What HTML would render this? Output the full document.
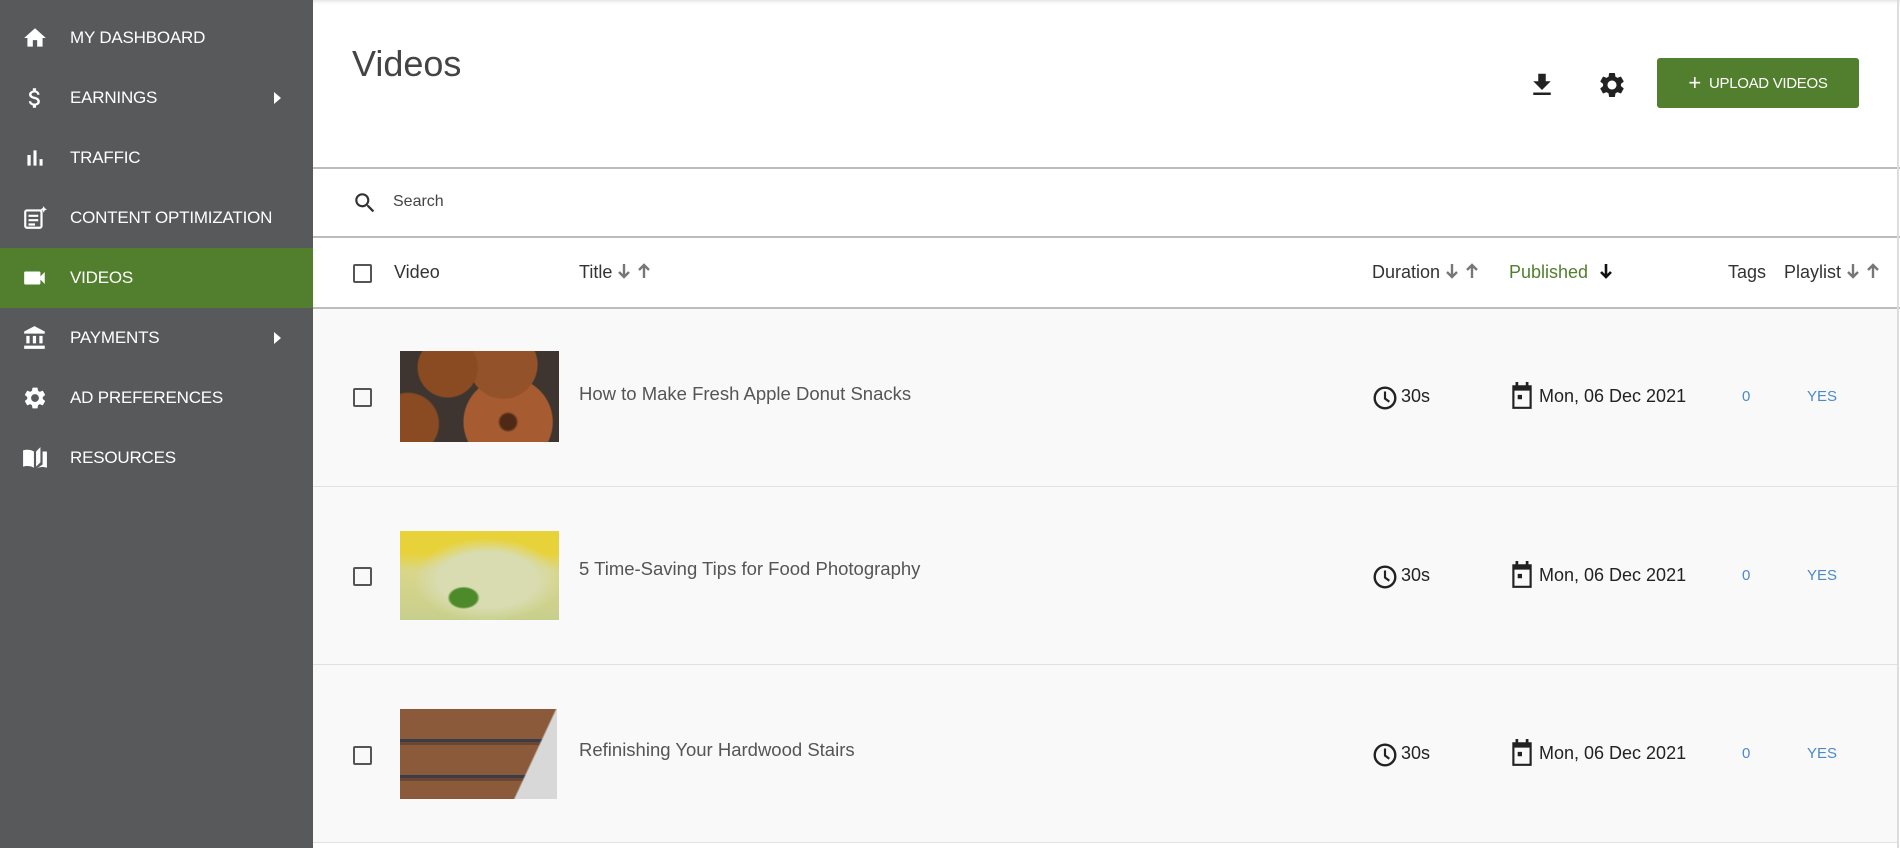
<!DOCTYPE html>
<html><head><meta charset="utf-8"><style>
*{margin:0;padding:0;box-sizing:border-box}
body{width:1900px;height:848px;overflow:hidden;font-family:"Liberation Sans",sans-serif;background:#fff;position:relative}
.sb{position:absolute;left:0;top:0;width:313px;height:848px;background:#58595b}
.it{position:absolute;left:0;width:313px;height:60px;color:#fff;font-size:17px;letter-spacing:-0.2px}
.it.act{background:#527f2e}
.it .ic{position:absolute;left:22px;top:17px;width:26px;height:26px}
.it .tx{position:absolute;left:70px;top:20px}
.it .ar{position:absolute;left:274px;top:24px;width:0;height:0;border-left:7px solid #fff;border-top:6px solid transparent;border-bottom:6px solid transparent}
.main{position:absolute;left:313px;top:0;right:0;height:848px;box-shadow:inset 0 4px 4px -3px rgba(0,0,0,.15)}
.abs{position:absolute}
.hl{position:absolute;left:313px;right:0;height:2px;background:#bcbcbc}
.cb{position:absolute;left:353px;width:19px;height:19px;border:2px solid #555;border-radius:2px}
.th{position:absolute;top:262px;font-size:18px;color:#333;white-space:nowrap}
.th svg{vertical-align:-2px;margin-left:4px}
.row{position:absolute;left:313px;right:2px;background:#f9f9f9;border-bottom:1px solid #e0e0e0}
.tt{position:absolute;left:579px;font-size:18.5px;color:#555}
.dur,.dt{position:absolute;font-size:18px;color:#222}
.z,.y{position:absolute;font-size:15px;color:#4a8ac9}
</style></head><body>
<div class="sb">
 <div class="it" style="top:8px"><svg class="ic" viewBox="0 0 24 24"><path fill="#fff" d="M10 20v-6h4v6h5v-8h3L12 3 2 12h3v8z"/></svg><span class="tx">MY DASHBOARD</span></div>
 <div class="it" style="top:68px"><svg class="ic" viewBox="0 0 24 24"><path fill="#fff" d="M11.8 10.9c-2.270-.59-3-1.2-3-2.15 0-1.09 1.01-1.85 2.7-1.85 1.78 0 2.440.85 2.5 2.1h2.21c-.07-1.72-1.12-3.3-3.21-3.81V3h-3v2.16c-1.94.42-3.5 1.68-3.5 3.61 0 2.31 1.91 3.46 4.7 4.13 2.5.6 3 1.48 3 2.41 0 .69-.49 1.79-2.7 1.79-2.06 0-2.87-.92-2.98-2.1h-2.2c.12 2.19 1.76 3.42 3.68 3.83V21h3v-2.15c1.95-.37 3.5-1.5 3.5-3.55 0-2.84-2.43-3.81-4.7-4.4z"/></svg><span class="tx">EARNINGS</span><span class="ar"></span></div>
 <div class="it" style="top:128px"><svg class="ic" viewBox="0 0 24 24"><path fill="#fff" d="M5 9.2h3V19H5zM10.6 5h2.8v14h-2.8zm5.6 8H19v6h-2.8z"/></svg><span class="tx">TRAFFIC</span></div>
 <div class="it" style="top:188px"><svg class="ic" viewBox="0 0 24 24"><rect x="3" y="5" width="15" height="16" rx="1.5" fill="none" stroke="#fff" stroke-width="2"/><path fill="#fff" d="M6 9h9v2H6zm0 4h9v2H6zm0 4h6v2H6zM20 1l1 2 2 1-2 1-1 2-1-2-2-1 2-1z"/></svg><span class="tx">CONTENT OPTIMIZATION</span></div>
 <div class="it act" style="top:248px"><svg class="ic" viewBox="0 0 24 24"><path fill="#fff" d="M17 10.5V7c0-.55-.45-1-1-1H3c-.55 0-1 .45-1 1v10c0 .55.45 1 1 1h13c.55 0 1-.45 1-1v-3.5l4 4v-11l-4 4z"/></svg><span class="tx">VIDEOS</span></div>
 <div class="it" style="top:308px"><svg class="ic" viewBox="0 0 24 24"><path fill="#fff" d="M4 10v7h3v-7H4zm6 0v7h3v-7h-3zM2 22h19v-3H2v3zm14-12v7h3v-7h-3zm-4.5-9L2 6v2h19V6l-9.5-5z"/></svg><span class="tx">PAYMENTS</span><span class="ar"></span></div>
 <div class="it" style="top:368px"><svg class="ic" viewBox="0 0 24 24"><path fill="#fff" d="M19.14 12.94c.04-.3.06-.61.06-.94 0-.32-.02-.64-.07-.94l2.03-1.58a.49.49 0 00.12-.61l-1.92-3.32a.488.488 0 00-.59-.22l-2.39.96c-.5-.38-1.030-.7-1.62-.94l-.36-2.54a.484.484 0 00-.48-.41h-3.84c-.24 0-.43.17-.47.41l-.36 2.54c-.59.24-1.13.57-1.62.94l-2.39-.96c-.22-.08-.47 0-.59.22L2.74 8.87c-.12.21-.08.47.12.61l2.03 1.58c-.05.3-.09.63-.09.94s.02.64.07.94l-2.03 1.58a.49.49 0 00-.12.61l1.92 3.32c.12.22.37.29.59.22l2.39-.96c.5.38 1.03.7 1.62.94l.36 2.54c.05.24.24.41.48.41h3.84c.24 0 .44-.17.47-.41l.36-2.54c.59-.24 1.13-.56 1.62-.94l2.39.96c.22.08.47 0 .59-.22l1.92-3.32c.12-.22.07-.47-.12-.61l-2.01-1.58zM12 15.6c-1.98 0-3.6-1.62-3.6-3.6s1.62-3.6 3.6-3.6 3.6 1.62 3.6 3.6-1.62 3.6-3.6 3.6z"/></svg><span class="tx">AD PREFERENCES</span></div>
 <div class="it" style="top:428px"><svg class="ic" viewBox="0 0 24 24"><path fill="#fff" d="M1 5c3-1 7-1 10 1v15c-3-2-7-2-10-1zm12 1l4-4v14l-4 4zm6 0h4v15c-3-1-7-1-10 1l6-4z"/></svg><span class="tx">RESOURCES</span></div>
</div>
<div class="main"></div>
<div class="abs" style="left:352px;top:43px;font-size:36px;color:#444">Videos</div>
<svg class="abs" style="left:1527px;top:70px" width="30" height="30" viewBox="0 0 24 24"><path fill="#222" d="M19 9h-4V3H9v6H5l7 7 7-7zM5 18v2h14v-2H5z"/></svg>
<svg class="abs" style="left:1597px;top:70px" width="30" height="30" viewBox="0 0 24 24"><path fill="#222" d="M19.14 12.94c.04-.3.06-.61.06-.94 0-.32-.02-.64-.07-.94l2.03-1.58a.49.49 0 00.12-.61l-1.92-3.32a.488.488 0 00-.59-.22l-2.39.96c-.5-.38-1.03-.7-1.62-.94l-.36-2.54a.484.484 0 00-.48-.41h-3.84c-.24 0-.43.17-.47.41l-.36 2.540c-.59.24-1.13.57-1.62.94l-2.39-.96c-.22-.08-.47 0-.59.22L2.74 8.87c-.12.21-.08.47.12.61l2.03 1.58c-.05.3-.09.63-.09.94s.02.64.07.94l-2.03 1.58a.49.49 0 00-.12.61l1.92 3.32c.12.22.37.29.59.22l2.39-.96c.5.38 1.03.7 1.62.94l.36 2.54c.05.24.24.41.48.41h3.84c.24 0 .44-.17.47-.41l.36-2.54c.59-.24 1.13-.56 1.62-.94l2.39.96c.22.08.47 0 .59-.22l1.92-3.32c.12-.22.07-.47-.12-.61l-2.01-1.58zM12 15.6c-1.98 0-3.6-1.62-3.6-3.6s1.62-3.6 3.6-3.6 3.6 1.62 3.6 3.6-1.62 3.6-3.6 3.6z"/></svg>
<div class="abs" style="left:1657px;top:58px;width:202px;height:50px;background:#527f2e;border-radius:3px;color:#fff;font-size:15px;line-height:50px;text-align:center;letter-spacing:-0.3px"><span style="font-size:22px;vertical-align:-2px;margin-right:8px">+</span>UPLOAD VIDEOS</div>
<div class="hl" style="top:167px"></div>
<svg class="abs" style="left:352px;top:190px" width="26" height="26" viewBox="0 0 24 24"><path fill="#333" d="M15.5 14h-.79l-.28-.27A6.47 6.47 0 0016 9.5 6.5 6.5 0 109.5 16c1.61 0 3.09-.59 4.23-1.57l.27.28v.79l5 4.99L20.49 19l-4.99-5zm-6 0C7.01 14 5 11.990 5 9.5S7.01 5 9.5 5 14 7.01 14 9.5 11.99 14 9.5 14z"/></svg>
<div class="abs" style="left:393px;top:193px;font-size:16px;color:#444">Search</div>
<div class="hl" style="top:236px"></div>
<div class="cb" style="top:264px"></div>
<div class="th" style="left:394px">Video</div>
<div class="th" style="left:579px">Title<svg width="16" height="18" viewBox="0 0 16 18"><path d="M8 2v13M3 10l5 5 5-5" fill="none" stroke="#777" stroke-width="2.4"/></svg><svg width="16" height="18" viewBox="0 0 16 18"><path d="M8 16V3M3 8l5-5 5 5" fill="none" stroke="#777" stroke-width="2.4"/></svg></div>
<div class="th" style="left:1372px">Duration<svg width="16" height="18" viewBox="0 0 16 18"><path d="M8 2v13M3 10l5 5 5-5" fill="none" stroke="#777" stroke-width="2.4"/></svg><svg width="16" height="18" viewBox="0 0 16 18"><path d="M8 16V3M3 8l5-5 5 5" fill="none" stroke="#777" stroke-width="2.4"/></svg></div>
<div class="th" style="left:1509px;color:#527f2e">Published<svg width="20" height="18" viewBox="0 0 16 18" style="margin-left:8px"><path d="M8 2v13M3 10l5 5 5-5" fill="none" stroke="#111" stroke-width="2.6"/></svg></div>
<div class="th" style="left:1728px">Tags</div>
<div class="th" style="left:1784px">Playlist<svg width="16" height="18" viewBox="0 0 16 18"><path d="M8 2v13M3 10l5 5 5-5" fill="none" stroke="#777" stroke-width="2.4"/></svg><svg width="16" height="18" viewBox="0 0 16 18"><path d="M8 16V3M3 8l5-5 5 5" fill="none" stroke="#777" stroke-width="2.4"/></svg></div>
<div class="hl" style="top:307px"></div>

<div class="row" style="top:309px;height:178px"></div>
<div class="row" style="top:487px;height:178px"></div>
<div class="row" style="top:665px;height:178px"></div>

<div class="cb" style="top:388px"></div>
<div class="cb" style="top:567px"></div>
<div class="cb" style="top:746px"></div>

<div class="abs" style="left:400px;top:351px;width:159px;height:91px;background:radial-gradient(circle at 30% 18%,#8a4a22 0 22%,transparent 23%),radial-gradient(circle at 65% 15%,#94522a 0 26%,transparent 27%),radial-gradient(circle at 68% 78%,#4e2a16 0 6%,#a65c30 8% 34%,transparent 35%),radial-gradient(circle at 5% 80%,#8a4a22 0 18%,transparent 19%),#3e3530"></div>
<div class="abs" style="left:400px;top:531px;width:159px;height:89px;background:radial-gradient(ellipse at 40% 75%,#4c8a2a 0 10%,transparent 12%),radial-gradient(ellipse at 55% 55%,#d8dcb0 0 40%,transparent 60%),linear-gradient(180deg,#e8d23a 0 25%,#d9d68a 45%,#c8cf8c 100%)"></div>
<div class="abs" style="left:400px;top:709px;width:157px;height:90px;background:linear-gradient(115deg,transparent 0 78%,#d8d8d8 79%),repeating-linear-gradient(180deg,#8a5a3a 0 30px,#3a3d48 30px 33px,#6b4630 33px 36px)"></div>

<div class="tt" style="top:383px">How to Make Fresh Apple Donut Snacks</div>
<div class="tt" style="top:558px">5 Time-Saving Tips for Food Photography</div>
<div class="tt" style="top:739px">Refinishing Your Hardwood Stairs</div>

<svg class="abs" style="left:1372px;top:385px" width="26" height="26" viewBox="0 0 24 24"><circle cx="12" cy="12" r="9.5" fill="none" stroke="#222" stroke-width="2.2"/><path d="M12 6v6.5l4 3" fill="none" stroke="#222" stroke-width="2"/></svg>
<svg class="abs" style="left:1372px;top:564px" width="26" height="26" viewBox="0 0 24 24"><circle cx="12" cy="12" r="9.5" fill="none" stroke="#222" stroke-width="2.2"/><path d="M12 6v6.5l4 3" fill="none" stroke="#222" stroke-width="2"/></svg>
<svg class="abs" style="left:1372px;top:742px" width="26" height="26" viewBox="0 0 24 24"><circle cx="12" cy="12" r="9.5" fill="none" stroke="#222" stroke-width="2.2"/><path d="M12 6v6.5l4 3" fill="none" stroke="#222" stroke-width="2"/></svg>
<div class="dur" style="left:1401px;top:386px">30s</div>
<div class="dur" style="left:1401px;top:565px">30s</div>
<div class="dur" style="left:1401px;top:743px">30s</div>

<svg class="abs" style="left:1509px;top:382px" width="26" height="28" viewBox="0 0 24 26"><path fill="#222" d="M6 0h2.5v3h7V0H18v3h3v22H3V3h3zM5 8v15h14V8zm3 4h4v4H8z"/></svg>
<svg class="abs" style="left:1509px;top:561px" width="26" height="28" viewBox="0 0 24 26"><path fill="#222" d="M6 0h2.5v3h7V0H18v3h3v22H3V3h3zM5 8v15h14V8zm3 4h4v4H8z"/></svg>
<svg class="abs" style="left:1509px;top:739px" width="26" height="28" viewBox="0 0 24 26"><path fill="#222" d="M6 0h2.5v3h7V0H18v3h3v22H3V3h3zM5 8v15h14V8zm3 4h4v4H8z"/></svg>
<div class="dt" style="left:1539px;top:386px">Mon, 06 Dec 2021</div>
<div class="dt" style="left:1539px;top:565px">Mon, 06 Dec 2021</div>
<div class="dt" style="left:1539px;top:743px">Mon, 06 Dec 2021</div>

<div class="z" style="left:1742px;top:388px">0</div>
<div class="z" style="left:1742px;top:567px">0</div>
<div class="z" style="left:1742px;top:745px">0</div>
<div class="y" style="left:1807px;top:388px">YES</div>
<div class="y" style="left:1807px;top:567px">YES</div>
<div class="y" style="left:1807px;top:745px">YES</div>
<div class="abs" style="left:1897px;top:0;width:2px;height:848px;background:#ddd"></div>
</body></html>
